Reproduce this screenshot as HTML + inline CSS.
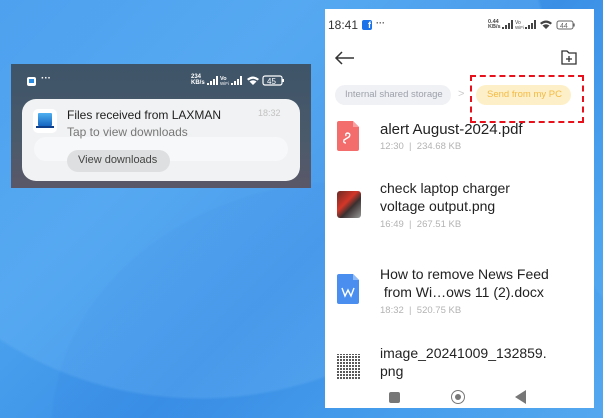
<!DOCTYPE html>
<html><head><meta charset="utf-8"><style>
*{margin:0;padding:0;box-sizing:border-box}
html,body{width:603px;height:418px;overflow:hidden}
body{position:relative;font-family:"Liberation Sans",sans-serif;
background:radial-gradient(ellipse 350px 325px at 200px 75px,rgba(120,190,250,.25) 99%,transparent 100%),
radial-gradient(ellipse 300px 250px at 350px 430px,rgba(40,120,220,.12) 99%,transparent 100%),
linear-gradient(135deg,#3f97ea 0%,#4aa2ee 30%,#3b90e6 55%,#4ba3ee 80%,#5aaef2 100%);}
.a{position:absolute}
.notif{left:11px;top:64px;width:300px;height:124px;background:linear-gradient(180deg,#3e5468 0%,#4a5a6b 60%,#5a5868 100%);}
.card{left:22px;top:99px;width:278px;height:82px;background:#f1f2f3;border-radius:14px;}
.phone{left:325px;top:9px;width:269px;height:399px;background:#fff;overflow:hidden}
.t{position:absolute;white-space:nowrap}
.meta{font-size:9.5px;color:#b3b3b3}
.title{font-size:14px;color:#222}
</style></head><body>

<div class="a notif">
  <div class="a" style="left:16px;top:13px;width:9px;height:9px;background:#fff;border-radius:2px"><div style="margin:2px;width:5px;height:4px;background:#2a8be0"></div></div>
  <div class="t" style="left:30px;top:9px;color:#fff;font-size:10px;font-weight:bold">···</div>
  <div class="t" style="left:180px;top:10px;color:#fff;font-size:6px;font-weight:bold;line-height:6px">234<br>KB/s</div>
  <svg class="a" style="left:196px;top:11px" width="96" height="12"><g fill="#fff">
   <rect x="0" y="8" width="2" height="2"/><rect x="3" y="6" width="2" height="4"/><rect x="6" y="4" width="2" height="6"/><rect x="9" y="1" width="2" height="9"/>
   <text x="13" y="5" font-size="5.5" font-weight="bold" font-family="Liberation Sans">Vo</text><text x="13" y="10" font-size="4.5" font-family="Liberation Sans">WiFi</text>
   <rect x="24" y="8" width="2" height="2"/><rect x="27" y="6" width="2" height="4"/><rect x="30" y="4" width="2" height="6"/><rect x="33" y="1" width="2" height="9"/>
   <path d="M40 4 Q46 -1 52 4 L50.5 5.5 Q46 2 41.5 5.5Z M42.5 6.5 Q46 4 49.5 6.5 L46 10Z"/></g>
   <rect x="56" y="1" width="19" height="9" rx="2" fill="none" stroke="#fff" stroke-width="1.2"/><rect x="75.5" y="4" width="1.5" height="3" fill="#fff"/>
   <text x="60" y="9" font-size="8" fill="#fff" font-family="Liberation Sans">45</text></svg>
</div>
<div class="a card">
  <div class="a" style="left:11px;top:10px;width:24px;height:24px;background:#fff;border-radius:5px">
    <div class="a" style="left:5px;top:4px;width:14px;height:13px;background:linear-gradient(#4fb0f0,#1565c0);border-radius:1px"></div>
    <div class="a" style="left:3px;top:17px;width:18px;height:2px;background:#0d3f8a"></div>
  </div>
  <div class="a" style="left:12px;top:38px;width:254px;height:24px;background:#f7f8f9;border-radius:12px"></div>
  <div class="t" style="left:45px;top:9px;font-size:12px;color:#1e1e1e">Files received from LAXMAN</div>
  <div class="t" style="left:236px;top:9px;font-size:9px;color:#c2c2c2">18:32</div>
  <div class="t" style="left:45px;top:26px;font-size:12px;color:#777">Tap to view downloads</div>
  <div class="a" style="left:45px;top:51px;width:103px;height:22px;background:#dedfe0;border-radius:11px"></div>
  <div class="t" style="left:56px;top:55px;font-size:11px;color:#444">View downloads</div>
</div>

<div class="a phone">
  <div class="t" style="left:3px;top:9px;font-size:12px;color:#333">18:41</div>
  <div class="a" style="left:37px;top:11px;width:10px;height:10px;background:#1a73e8;border-radius:2px;color:#fff;font-size:9px;font-weight:bold;line-height:11px;text-align:right;padding-right:1px">f</div>
  <div class="t" style="left:51px;top:9px;font-size:9px;color:#555;font-weight:bold">···</div>
  <div class="t" style="left:163px;top:11px;color:#444;font-size:5.5px;font-weight:bold;line-height:5px">0.44<br>KB/s</div>
  <svg class="a" style="left:177px;top:11px" width="92" height="11"><g fill="#444">
   <rect x="0" y="7" width="2" height="2"/><rect x="3" y="5" width="2" height="4"/><rect x="6" y="3" width="2" height="6"/><rect x="9" y="0" width="2" height="9"/>
   <text x="13" y="4" font-size="5" font-family="Liberation Sans">Vo</text><text x="13" y="9" font-size="4.5" font-family="Liberation Sans">WiFi</text>
   <rect x="23" y="7" width="2" height="2"/><rect x="26" y="5" width="2" height="4"/><rect x="29" y="3" width="2" height="6"/><rect x="32" y="0" width="2" height="9"/>
   <path d="M38 3 Q44 -2 50 3 L48.5 4.5 Q44 1 39.5 4.5Z M40.5 5.5 Q44 3 47.5 5.5 L44 9Z"/></g>
   <rect x="55" y="1" width="16" height="8" rx="2" fill="none" stroke="#666" stroke-width="1"/><rect x="71.5" y="3.5" width="1.2" height="3" fill="#666"/>
   <text x="58" y="8" font-size="7" fill="#666" font-family="Liberation Sans">44</text></svg>
  <svg class="a" style="left:9px;top:42px" width="22" height="14"><path d="M20 7H2M8 1L2 7L8 13" stroke="#333" stroke-width="1.5" fill="none"/></svg>
  <svg class="a" style="left:235px;top:40px" width="18" height="17"><path d="M2 2H7L9 4H16V15H2Z" stroke="#333" stroke-width="1.3" fill="none"/><path d="M9 7V13M6 10H12" stroke="#333" stroke-width="1.3"/></svg>
  <div class="a" style="left:10px;top:76px;width:116px;height:20px;background:#f0f1f5;border-radius:10px"></div>
  <div class="t" style="left:20px;top:80px;font-size:9.5px;color:#9ea1ab">Internal shared storage</div>
  <div class="t" style="left:133px;top:79px;font-size:11px;color:#ccc">&gt;</div>
  <div class="a" style="left:151px;top:76px;width:95px;height:20px;background:#fdf0c9;border-radius:10px"></div>
  <div class="t" style="left:162px;top:80px;font-size:9.5px;color:#f5b942">Send from my PC</div>
  <div class="a" style="left:145px;top:66px;width:114px;height:48px;border:2.5px dashed #e8101a"></div>

  <svg class="a" style="left:12px;top:112px" width="22" height="30"><path d="M0 2Q0 0 2 0H16L22 6V28Q22 30 20 30H2Q0 30 0 28Z" fill="#f46d6d"/><path d="M16 0V6H22Z" fill="#f9a0a0"/><path d="M9 22Q6 22 7 19L12 16Q14 13 11 12Q8 12 9 15" stroke="#fff" stroke-width="1.4" fill="none"/></svg>
  <div class="t title" style="left:55px;top:112px;font-size:15px">alert August-2024.pdf</div>
  <div class="t meta" style="left:55px;top:132px">12:30 &nbsp;|&nbsp; 234.68 KB</div>

  <div class="a" style="left:12px;top:182px;width:24px;height:27px;border-radius:3px;background:linear-gradient(135deg,#6b2a25,#d33628 40%,#3a3030 60%,#999 100%)"></div>
  <div class="t title" style="left:55px;top:171px">check laptop charger</div>
  <div class="t title" style="left:55px;top:189px">voltage output.png</div>
  <div class="t meta" style="left:55px;top:210px">16:49 &nbsp;|&nbsp; 267.51 KB</div>

  <svg class="a" style="left:12px;top:265px" width="22" height="30"><path d="M0 2Q0 0 2 0H16L22 6V28Q22 30 20 30H2Q0 30 0 28Z" fill="#4a8ff0"/><path d="M16 0V6H22Z" fill="#90bbf7"/><path d="M5 14L8 22L11 16L14 22L17 14" stroke="#fff" stroke-width="1.4" fill="none"/></svg>
  <div class="t title" style="left:55px;top:257px">How to remove News Feed</div>
  <div class="t title" style="left:55px;top:275px">&nbsp;from Wi…ows 11 (2).docx</div>
  <div class="t meta" style="left:55px;top:296px">18:32 &nbsp;|&nbsp; 520.75 KB</div>

  <div class="a" style="left:12px;top:345px;width:24px;height:25px;background:repeating-linear-gradient(90deg,#222 0 2px,#fff 2px 3px),#fff;opacity:.75"></div>
  <div class="a" style="left:12px;top:345px;width:24px;height:25px;background:repeating-linear-gradient(0deg,transparent 0 2px,#fff 2px 3px)"></div>
  <div class="t title" style="left:55px;top:336px">image_20241009_132859.</div>
  <div class="t title" style="left:55px;top:354px">png</div>

  <div class="a" style="left:64px;top:383px;width:11px;height:11px;background:#777;border-radius:2px"></div>
  <div class="a" style="left:126px;top:381px;width:14px;height:14px;border:1.5px solid #777;border-radius:50%"><div style="margin:2.5px;width:6px;height:6px;background:#777;border-radius:50%"></div></div>
  <svg class="a" style="left:190px;top:381px" width="12" height="14"><path d="M11 0V14L0 7Z" fill="#777"/></svg>
</div>
</body></html>
